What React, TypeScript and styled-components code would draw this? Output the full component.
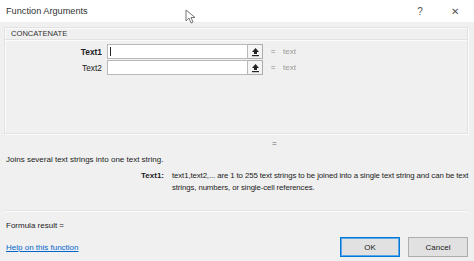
import styled, { createGlobalStyle } from 'styled-components';

const GlobalStyle = createGlobalStyle`
    html, body {
        margin: 0;
        padding: 0;
        background: #f0f0f0;
    }
    body {
        font-family: "Liberation Sans", Arial, sans-serif;
        color: #1e1e1e;
    }
`;

const Window = styled.div`
    position: relative;
    width: 474px;
    height: 261px;
    background: #f0f0f0;
    display: flex;
    flex-direction: column;
    overflow: hidden;
    font-size: 8px;
`;

const TitleBar = styled.div`
    height: 22px;
    flex: none;
    background: #fff;
    display: flex;
    align-items: center;
    padding: 0 6px;
`;

const Title = styled.span`
    font-size: 9.2px;
    color: #333;
    flex: 1;
`;

const TitleButton = styled.span<{ $w: number }>`
    width: ${p => p.$w}px;
    text-align: center;
    font-size: 10px;
    color: #555;
`;

const Cursor = styled.svg`
    position: absolute;
    left: 185px;
    top: 9px;
`;

const Body = styled.div`
    flex: 1;
    display: flex;
    flex-direction: column;
    padding: 5px 6px 0 4px;
`;

const GroupBox = styled.div`
    height: 105px;
    flex: none;
    border: 1px solid #e2e2e2;
    box-shadow: inset 1px 1px 0 #fbfbfb, 1px 1px 0 #fbfbfb;
    display: flex;
    flex-direction: column;
`;

const GroupHeader = styled.div`
    padding: 1px 6px 1px;
    line-height: 9px;
    border-bottom: 1px solid #e2e2e2;
    box-shadow: 0 1px 0 #fbfbfb;
    font-size: 7.6px;
    color: #333;
`;

const ArgList = styled.div`
    display: flex;
    flex-direction: column;
    gap: 1px;
    padding-top: 4px;
`;

const ArgRow = styled.div`
    display: grid;
    grid-template-columns: 102px 141px 15px 20px auto;
    align-items: center;
    height: 15px;
`;

const ArgLabel = styled.span<{ $bold?: boolean }>`
    text-align: right;
    padding-right: 5px;
    font-size: 8.4px;
    font-weight: ${p => (p.$bold ? 700 : 400)};
    color: #222;
`;

const ArgInput = styled.div`
    height: 15px;
    box-sizing: border-box;
    background: #fff;
    border: 1px solid #b9b9b9;
    display: flex;
    align-items: center;
    padding-left: 2px;
`;

const Caret = styled.span`
    width: 1px;
    height: 9px;
    background: #222;
`;

const RefButton = styled.div`
    height: 15px;
    box-sizing: border-box;
    border: 1px solid #adadad;
    border-left: none;
    background: #f4f4f4;
    display: flex;
    align-items: center;
    justify-content: center;
`;

const Equals = styled.span`
    text-align: center;
    color: #888;
`;

const ArgValue = styled.span`
    color: #999;
`;

const ResultLine = styled.div`
    height: 19px;
    flex: none;
    display: flex;
    align-items: center;
    padding-left: 268px;
    color: #666;
`;

const Description = styled.div`
    padding-left: 2px;
    height: 14px;
    flex: none;
    line-height: 14px;
    color: #222;
`;

const ArgHelp = styled.div`
    display: flex;
    padding-top: 3px;
    height: 40px;
    flex: none;
    border-bottom: 1px solid #e4e4e4;
    box-shadow: 0 1px 0 #fbfbfb;
    line-height: 12px;
`;

const HelpLabel = styled.span`
    flex: none;
    width: 160px;
    font-weight: 700;
    text-align: right;
    padding-right: 8px;
`;

const HelpText = styled.span`
    flex: none;
    width: 302px;
    font-size: 7.8px;
    color: #222;
    letter-spacing: -0.1px;
`;

const FormulaResult = styled.div`
    padding: 10px 2px 0;
    height: 16px;
    flex: none;
    line-height: 10px;
    color: #222;
`;

const Footer = styled.div`
    display: flex;
    align-items: center;
    padding-left: 2px;
    height: 20px;
    flex: none;
`;

const HelpLink = styled.a`
    flex: 1;
    color: #0066cc;
    text-decoration: underline;
    padding-top: 1px;
`;

const Button = styled.button<{ $default?: boolean }>`
    width: 60px;
    height: 20px;
    margin-left: 8px;
    font-family: inherit;
    font-size: 8px;
    color: #222;
    background: #e1e1e1;
    border: 1px solid ${p => (p.$default ? '#0078d7' : '#adadad')};
    box-shadow: ${p => (p.$default ? 'inset 0 0 0 1px #5aa6e6' : 'none')};
    padding: 0;
`;

function RefIcon() {
    return (
        <svg width="9" height="10" viewBox="0 0 9 10">
            <path d="M4.5 1 L8 5 L6 5 L6 7 L3 7 L3 5 L1 5 Z" fill="#222" />
            <rect x="1" y="8" width="7" height="1.2" fill="#222" />
        </svg>
    );
}

const args = [
    { name: 'Text1', bold: true, focused: true },
    { name: 'Text2', bold: false, focused: false },
];

export default function App() {
    return (
        <>
            <GlobalStyle />
            <Window>
                <TitleBar>
                    <Title>Function Arguments</Title>
                    <TitleButton $w={12}>?</TitleButton>
                    <TitleButton $w={16} />
                    <TitleButton $w={26}>✕</TitleButton>
                </TitleBar>
                <Cursor width="12" height="16" viewBox="0 0 12 16">
                    <path d="M1 1 L1 12 L4 9 L6 14 L8 13 L6 8.5 L10 8.5 Z" fill="#fff" stroke="#666" strokeWidth="0.9" />
                </Cursor>
                <Body>
                    <GroupBox>
                        <GroupHeader>CONCATENATE</GroupHeader>
                        <ArgList>
                            {args.map(a => (
                                <ArgRow key={a.name}>
                                    <ArgLabel $bold={a.bold}>{a.name}</ArgLabel>
                                    <ArgInput>{a.focused && <Caret />}</ArgInput>
                                    <RefButton><RefIcon /></RefButton>
                                    <Equals>=</Equals>
                                    <ArgValue>text</ArgValue>
                                </ArgRow>
                            ))}
                        </ArgList>
                    </GroupBox>
                    <ResultLine>=</ResultLine>
                    <Description>Joins several text strings into one text string.</Description>
                    <ArgHelp>
                        <HelpLabel>Text1:</HelpLabel>
                        <HelpText>
                            text1,text2,... are 1 to 255 text strings to be joined into a single text string and can be text strings, numbers, or single-cell references.
                        </HelpText>
                    </ArgHelp>
                    <FormulaResult>Formula result =</FormulaResult>
                    <Footer>
                        <HelpLink>Help on this function</HelpLink>
                        <Button $default>OK</Button>
                        <Button>Cancel</Button>
                    </Footer>
                </Body>
            </Window>
        </>
    );
}
